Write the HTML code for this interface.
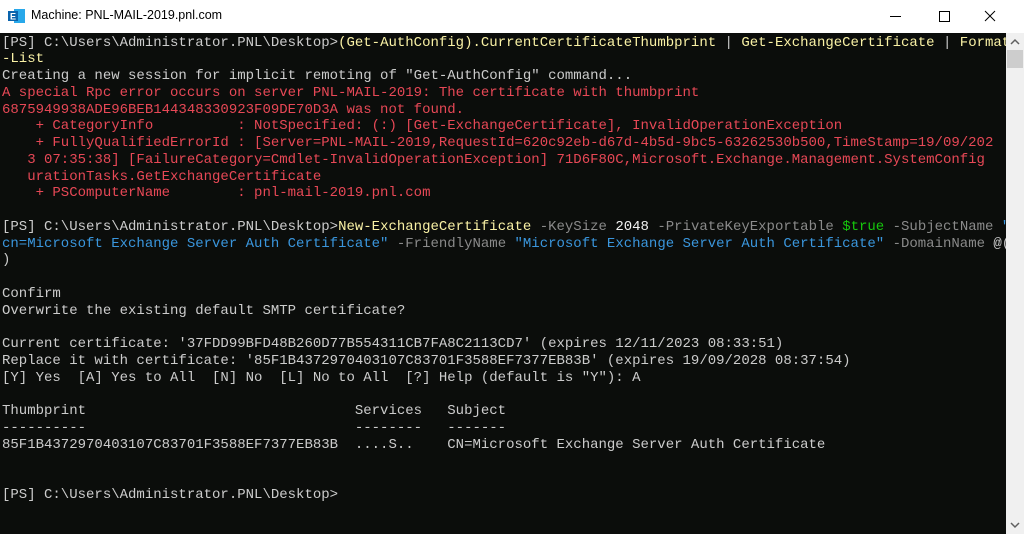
<!DOCTYPE html>
<html><head><style>
body{margin:0;width:1024px;height:536px;overflow:hidden;background:#fff;font-family:"Liberation Sans",sans-serif;position:relative}
.tb{position:absolute;left:0;top:0;width:1024px;height:33px;background:#fff}
.tt{position:absolute;left:31px;top:8px;font-size:12.5px;color:#000}
.con{position:absolute;left:0;top:33px;width:1006px;height:501px;background:#0b0d0b}
pre{margin:0;position:absolute;left:2px;top:1.5px;font:14px/16.75px "Liberation Mono",monospace;color:#cccccc;white-space:pre}
.y{color:#f9f1a5}.r{color:#e74856}.b{color:#3a96dd}.g{color:#16c60c}.d{color:#8a8a8a}.w{color:#f2f2f2}
.sb{position:absolute;left:1006px;top:33px;width:18px;height:501px;background:#f0f0f0}
.th{position:absolute;left:1007px;top:50px;width:16px;height:18px;background:#cdcdcd}
</style></head><body>
<div class="tb">
<svg style="position:absolute;left:8px;top:8px" width="17" height="16" viewBox="0 0 17 16"><rect x="6" y="1" width="11" height="14" fill="#28a8ea"/><rect x="0" y="3" width="10" height="10" fill="#0a64ad"/><text x="2" y="11.5" font-size="9" font-family="Liberation Sans" font-weight="bold" fill="#fff">E</text></svg>
<div class="tt">Machine: PNL-MAIL-2019.pnl.com</div>
<svg style="position:absolute;left:890px;top:9px" width="130" height="16"><line x1="0" y1="7.5" x2="11" y2="7.5" stroke="#000"/><rect x="49.5" y="2.5" width="10" height="10" fill="none" stroke="#000"/><path d="M95 2l10 10M105 2l-10 10" stroke="#000"/></svg>
</div>
<div class="con"><pre>[PS] C:\Users\Administrator.PNL\Desktop&gt;<span class="y">(Get-AuthConfig).CurrentCertificateThumbprint</span> | <span class="y">Get-ExchangeCertificate</span> | <span class="y">Format</span>
<span class="y">-List</span>
Creating a new session for implicit remoting of "Get-AuthConfig" command...
<span class="r">A special Rpc error occurs on server PNL-MAIL-2019: The certificate with thumbprint
6875949938ADE96BEB144348330923F09DE70D3A was not found.
    + CategoryInfo          : NotSpecified: (:) [Get-ExchangeCertificate], InvalidOperationException
    + FullyQualifiedErrorId : [Server=PNL-MAIL-2019,RequestId=620c92eb-d67d-4b5d-9bc5-63262530b500,TimeStamp=19/09/202
   3 07:35:38] [FailureCategory=Cmdlet-InvalidOperationException] 71D6F80C,Microsoft.Exchange.Management.SystemConfig
   urationTasks.GetExchangeCertificate
    + PSComputerName        : pnl-mail-2019.pnl.com</span>

[PS] C:\Users\Administrator.PNL\Desktop&gt;<span class="y">New-ExchangeCertificate</span> <span class="d">-KeySize</span> <span class="w">2048</span> <span class="d">-PrivateKeyExportable</span> <span class="g">$true</span> <span class="d">-SubjectName</span> <span class="b">"
cn=Microsoft Exchange Server Auth Certificate"</span> <span class="d">-FriendlyName</span> <span class="b">"Microsoft Exchange Server Auth Certificate"</span> <span class="d">-DomainName</span> @(
)

Confirm
Overwrite the existing default SMTP certificate?

Current certificate: '37FDD99BFD48B260D77B554311CB7FA8C2113CD7' (expires 12/11/2023 08:33:51)
Replace it with certificate: '85F1B4372970403107C83701F3588EF7377EB83B' (expires 19/09/2028 08:37:54)
[Y] Yes  [A] Yes to All  [N] No  [L] No to All  [?] Help (default is "Y"): A

Thumbprint                                Services   Subject
----------                                --------   -------
85F1B4372970403107C83701F3588EF7377EB83B  ....S..    CN=Microsoft Exchange Server Auth Certificate


[PS] C:\Users\Administrator.PNL\Desktop&gt;</pre></div>
<div class="sb"></div><div class="th"></div>
<svg style="position:absolute;left:1009px;top:37px" width="12" height="10"><path d="M2 7l4-4 4 4" fill="none" stroke="#606060" stroke-width="1.5"/></svg>
<svg style="position:absolute;left:1009px;top:520px" width="12" height="10"><path d="M2 3l4 4 4-4" fill="none" stroke="#606060" stroke-width="1.5"/></svg>
</body></html>
